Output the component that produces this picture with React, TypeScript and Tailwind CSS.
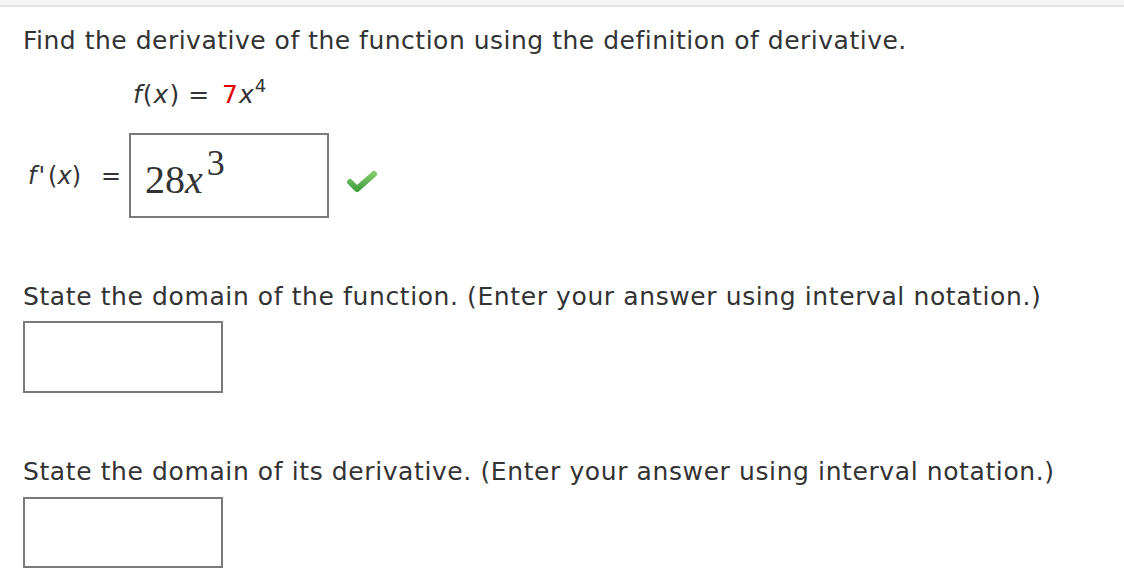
import React from "react";

function Check() {
  return (
    <svg width="32" height="24" viewBox="0 0 32 24">
      <defs>
        <linearGradient id="g" x1="0" y1="0" x2="0" y2="1">
          <stop offset="0" stopColor="#7fca6c" />
          <stop offset="1" stopColor="#45a040" />
        </linearGradient>
      </defs>
      <path d="M4 12 L11 19 L28 4" fill="none" stroke="url(#g)" strokeWidth="6" strokeLinecap="round" strokeLinejoin="round" />
    </svg>
  );
}

export default function App() {
  const font = { fontFamily: "Verdana, 'DejaVu Sans', sans-serif" };
  return (
    <div className="w-[1124px] h-[586px] bg-white text-[#333333] overflow-hidden" style={font}>
      <div className="h-[7px] bg-[#f6f6f6] border-b-2 border-[#e2e2e2]" />
      <div className="pl-[23px] pt-[18px]">
        <p className="text-[25px] leading-[32px] tracking-[0.5px]">Find the derivative of the function using the definition of derivative.</p>
        <div className="pl-[110px] mt-[22px] text-[25px] leading-[32px] tracking-[1px] flex items-baseline">
          <span><span className="italic">f</span>(<span className="italic">x</span>)</span>
          <span className="ml-[8px]">=</span>
          <span className="ml-[12px] text-[#e00000]">7</span>
          <span className="italic">x</span>
          <span className="text-[18px] relative top-[-11px]">4</span>
        </div>
        <div className="flex items-center mt-[20px]">
          <span className="text-[24px] w-[106px] pl-[5px] flex items-baseline">
            <span className="italic">f</span>
            <span className="ml-[2px]">'</span>
            <span className="ml-[3px]">(</span>
            <span className="italic">x</span>
            <span>)</span>
            <span className="ml-[20px]">=</span>
          </span>
          <div className="w-[200px] h-[85px] border-2 border-[#7a7a7a] flex items-end pl-[14px] pb-[16px]" style={{ fontFamily: "'Liberation Serif', serif" }}>
            <span className="text-[40px] leading-none flex items-baseline">
              <span>28</span>
              <span className="italic">x</span>
              <span className="text-[36px] relative top-[-18px] ml-[4px]">3</span>
            </span>
          </div>
          <div className="ml-[17px] mt-[12px]"><Check /></div>
        </div>
        <p className="text-[25px] leading-[32px] tracking-[0.6px] mt-[63px]">State the domain of the function. (Enter your answer using interval notation.)</p>
        <div className="w-[200px] h-[72px] border-2 border-[#7a7a7a] mt-[8px]" />
        <p className="text-[25px] leading-[32px] tracking-[0.6px] mt-[63px]">State the domain of its derivative. (Enter your answer using interval notation.)</p>
        <div className="w-[200px] h-[71px] border-2 border-[#7a7a7a] mt-[9px]" />
      </div>
    </div>
  );
}
